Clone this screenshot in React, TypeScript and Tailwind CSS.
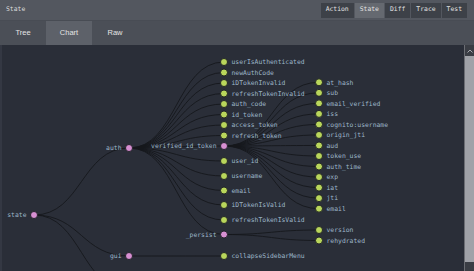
import React from 'react';

type N = { name: string; x: number; y: number; kids?: N[]; parent?: boolean };

const leaf = (name: string, x: number, y: number): N => ({ name, x, y });

const tree: N = {
  name: 'state',
  x: 32,
  y: 215,
  parent: true,
  kids: [
    {
      name: 'auth',
      x: 127,
      y: 148,
      parent: true,
      kids: [
        leaf('userIsAuthenticated', 222, 62),
        leaf('newAuthCode', 222, 72.5),
        leaf('iDTokenInvalid', 222, 83),
        leaf('refreshTokenInvalid', 222, 93.5),
        leaf('auth_code', 222, 104),
        leaf('id_token', 222, 114.5),
        leaf('access_token', 222, 125),
        leaf('refresh_token', 222, 135.5),
        {
          name: 'verified_id_token',
          x: 222,
          y: 146,
          parent: true,
          kids: [
            'at_hash',
            'sub',
            'email_verified',
            'iss',
            'cognito:username',
            'origin_jti',
            'aud',
            'token_use',
            'auth_time',
            'exp',
            'iat',
            'jti',
            'email',
          ].map((n, i) => leaf(n, 317, 82.3 + i * 10.53)),
        },
        leaf('user_id', 222, 161),
        leaf('username', 222, 176),
        leaf('email', 222, 190.5),
        leaf('iDTokenIsValid', 222, 205),
        leaf('refreshTokenIsValid', 222, 220),
        {
          name: '_persist',
          x: 222,
          y: 234.5,
          parent: true,
          kids: [leaf('version', 317, 230), leaf('rehydrated', 317, 240.5)],
        },
      ],
    },
    {
      name: 'gui',
      x: 127,
      y: 256,
      parent: true,
      kids: [leaf('collapseSidebarMenu', 222, 256)],
    },
    // runs off the bottom of the view, only its link shows
    { name: '', x: 127, y: 290, parent: true, kids: [] },
  ],
};

function flatten(n: N, out: N[] = []) {
  out.push(n);
  n.kids?.forEach((k) => flatten(k, out));
  return out;
}

function links(n: N, out: string[] = []) {
  n.kids?.forEach((k) => {
    const mx = (n.x + k.x) / 2;
    out.push(`M${n.x},${n.y}C${mx},${n.y} ${mx},${k.y} ${k.x},${k.y}`);
    links(k, out);
  });
  return out;
}

function Chart() {
  const all = flatten(tree);
  return (
    <svg width="464" height="226" viewBox="0 45 464 226" className="block">
      <g fill="none" stroke="#15171c" strokeWidth="0.9">
        {links(tree).map((d, i) => (
          <path key={i} d={d} />
        ))}
      </g>
      {all.map((n) => (
        <g key={n.name + n.y}>
          <circle
            cx={n.x}
            cy={n.y}
            r="3.5"
            fill={n.parent ? '#d78fd2' : '#b9d65b'}
            stroke="#1a1c21"
            strokeWidth="0.9"
          />
          {n.name && (
            <text
              x={n.parent ? n.x - 7.5 : n.x + 7.5}
              y={n.y}
              dy="2.2"
              textAnchor={n.parent ? 'end' : 'start'}
              fill="#9db6c8"
              fontSize="6.4"
              fontFamily="'DejaVu Sans Mono', monospace"
            >
              {n.name}
            </text>
          )}
        </g>
      ))}
    </svg>
  );
}

export default function App() {
  const buttons = ['Action', 'State', 'Diff', 'Trace', 'Test'];
  const tabs = ['Tree', 'Chart', 'Raw'];

  return (
    <div className="w-[474px] h-[271px] overflow-hidden flex flex-col bg-[#2a2e38]">
      {/* Header */}
      <div className="h-[21px] flex items-center justify-between pl-[6px] pr-[7px] bg-[#53575f] border-b border-[#484c54]">
        <span className="text-[6.4px] text-[#dcdcdc] font-['DejaVu_Sans_Mono',monospace]">State</span>
        <div className="flex gap-[1px]">
          {buttons.map((b) => (
            <div
              key={b}
              className={`h-[15px] px-[5px] flex items-center text-[6.4px] text-[#e2e2e2] font-['DejaVu_Sans_Mono',monospace] ${
                b === 'State' ? 'bg-[#656970]' : 'bg-[#3d4148]'
              }`}
            >
              {b}
            </div>
          ))}
        </div>
      </div>

      {/* Tabs */}
      <div className="h-[24px] flex bg-[#4b4f57]">
        {tabs.map((t) => (
          <div
            key={t}
            className={`w-[46px] flex items-center justify-center text-[7.5px] text-[#e4e4e4] font-['Liberation_Sans',sans-serif] ${
              t === 'Chart' ? 'bg-[#5d6169]' : ''
            }`}
          >
            {t}
          </div>
        ))}
      </div>

      {/* Chart */}
      <div className="flex-1 flex min-h-0">
        <div className="flex-1 overflow-hidden border-l-2 border-[#343843]">
          <Chart />
        </div>
        <div className="w-[10px] flex flex-col bg-[#a0a2a8] border-l border-[#6c6e74]">
          <div className="h-[11px] bg-[#3a3d44] flex items-center justify-center">
            <svg width="6" height="4" viewBox="0 0 6 4">
              <path d="M0.5 3.5 L3 1 L5.5 3.5" fill="none" stroke="#a8aab0" strokeWidth="1" />
            </svg>
          </div>
          <div className="flex-1" />
          <div className="h-[9px] bg-[#3a3d44]" />
        </div>
      </div>
    </div>
  );
}
